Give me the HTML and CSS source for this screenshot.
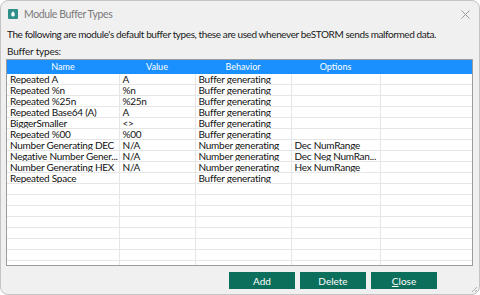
FILE: index.html
```html
<!DOCTYPE html>
<html lang="en">
  <head>
    <meta charset="UTF-8" />
    <title>Module Buffer Types</title>
    <link rel="stylesheet" href="styles.css">
  </head>
  <body>
    <div class="window">

      <div class="titlebar">
        <span class="app-icon">
          <svg width="10" height="10" viewBox="0 0 10 10">
            <rect width="10" height="10" rx="1" fill="#2f8f8a"/>
            <path d="M5 2.2 C3.6 3.4 3 4.6 3.4 6.2 L4.4 7.6 L5.6 7.6 L6.6 6.2 C7 4.6 6.4 3.4 5 2.2 Z" fill="#ffffff"/>
          </svg>
        </span>
        <span class="title">Module Buffer Types</span>
        <span class="close-x">
          <svg width="9" height="9" viewBox="0 0 9 9">
            <path d="M0.5 0.5 L8.5 8.5 M8.5 0.5 L0.5 8.5" stroke="#9a9a9a" stroke-width="1"/>
          </svg>
        </span>
      </div>

      <div class="content">
        <p class="intro">The following are module's default buffer types, these are used whenever beSTORM sends malformed data.</p>
        <p class="label">Buffer types:</p>

        <div class="grid">
          <table class="buf-table">
            <colgroup>
              <col class="c-name">
              <col class="c-value">
              <col class="c-behavior">
              <col class="c-options">
              <col>
            </colgroup>
            <thead>
              <tr>
                <th>Name</th>
                <th>Value</th>
                <th>Behavior</th>
                <th>Options</th>
                <th></th>
              </tr>
            </thead>
            <tbody class="js-rows"></tbody>
          </table>
        </div>
      </div>

      <div class="buttons">
        <button class="dlg-but">Add</button>
        <button class="dlg-but">Delete</button>
        <button class="dlg-but"><u>C</u>lose</button>
      </div>

      <span class="grip">
        <svg width="8" height="8" viewBox="0 0 8 8">
          <path d="M7 2 L2 7 M7 5 L5 7" stroke="#b0b0b0" stroke-width="1"/>
        </svg>
      </span>

    </div>

    <script>
      const rows = [
        ['Repeated A', 'A', 'Buffer generating', ''],
        ['Repeated %n', '%n', 'Buffer generating', ''],
        ['Repeated %25n', '%25n', 'Buffer generating', ''],
        ['Repeated Base64 (A)', 'A', 'Buffer generating', ''],
        ['BiggerSmaller', '<>', 'Buffer generating', ''],
        ['Repeated %00', '%00', 'Buffer generating', ''],
        ['Number Generating DEC', 'N/A', 'Number generating', 'Dec NumRange'],
        ['Negative Number Gener...', 'N/A', 'Number generating', 'Dec Neg NumRan...'],
        ['Number Generating HEX', 'N/A', 'Number generating', 'Hex NumRange'],
        ['Repeated Space', '', 'Buffer generating', '']
      ];

      let html = '';
      for (let i = 0; i < 18; i++) {
        const r = rows[i] || ['', '', '', ''];
        html += '<tr>';
        for (const cell of r) {
          const td = document.createElement('td');
          td.textContent = cell;
          html += td.outerHTML;
        }
        html += '<td></td></tr>';
      }
      document.querySelector('.js-rows').innerHTML = html;
    </script>
  </body>
</html>
```

FILE: styles.css
```css
body{
  margin: 0;
  background-color: #ffffff;
  font-family: Lato, "Liberation Sans", sans-serif;
  color: #1a1a1a;
}
.window{
  position: relative;
  width: 480px;
  height: 295px;
  box-sizing: border-box;
  border: 1px solid #c4c4c4;
  border-radius: 8px;
  background-color: #f0f0f0;
  display: flex;
  flex-direction: column;
  overflow: hidden;
}
.titlebar{
  height: 24px;
  display: flex;
  align-items: center;
  padding-left: 7px;
  padding-top: 1px;
}
.app-icon{
  display: flex;
  width: 10px;
  height: 10px;
}
.title{
  margin-left: 6px;
  font-size: 10.5px;
  letter-spacing: -0.4px;
  color: #7a7a7a;
}
.close-x{
  margin-left: auto;
  margin-right: 9px;
  display: flex;
}
.content{
  padding: 0 6px 0 5px;
}
.intro{
  margin: 0;
  margin-top: 1px;
  font-size: 10px;
  letter-spacing: -0.4px;
  line-height: 14px;
  padding-left: 1px;
  white-space: nowrap;
}
.label{
  margin: 0;
  margin-top: 3px;
  font-size: 10px;
  letter-spacing: -0.2px;
  line-height: 14px;
  padding-left: 1px;
}
.grid{
  margin-top: 1px;
  height: 207px;
  box-sizing: border-box;
  border: 1px solid #9c9c9c;
  background-color: #ffffff;
  overflow: hidden;
}
.buf-table{
  width: 100%;
  table-layout: fixed;
  border-collapse: collapse;
  font-size: 10px;
  letter-spacing: -0.25px;
}
.c-name{
  width: 112px;
}
.c-value{
  width: 76px;
}
.c-behavior{
  width: 96px;
}
.c-options{
  width: 89px;
}
.buf-table th{
  background-color: #1a90ff;
  color: #ffffff;
  font-weight: normal;
  font-size: 9px;
  letter-spacing: 0;
  height: 14px;
  padding: 0;
  line-height: 14px;
}
.buf-table td{
  height: 10px;
  padding: 0 3px;
  line-height: 10px;
  white-space: nowrap;
  overflow: hidden;
  border: 1px solid #e6e6e6;
  border-top: none;
  color: #111111;
}
.buf-table td:first-child{
  border-left: none;
}
.buf-table td:last-child{
  border-right: none;
}
.buttons{
  display: flex;
  justify-content: flex-end;
  gap: 5px;
  padding-right: 42px;
  margin-top: 6px;
}
.dlg-but{
  width: 66px;
  height: 17px;
  border: none;
  background-color: #0b6f5b;
  color: #ffffff;
  font-family: Lato, sans-serif;
  font-size: 10px;
  padding: 0;
}
.grip{
  position: absolute;
  right: 1px;
  bottom: 1px;
  display: flex;
}
```
